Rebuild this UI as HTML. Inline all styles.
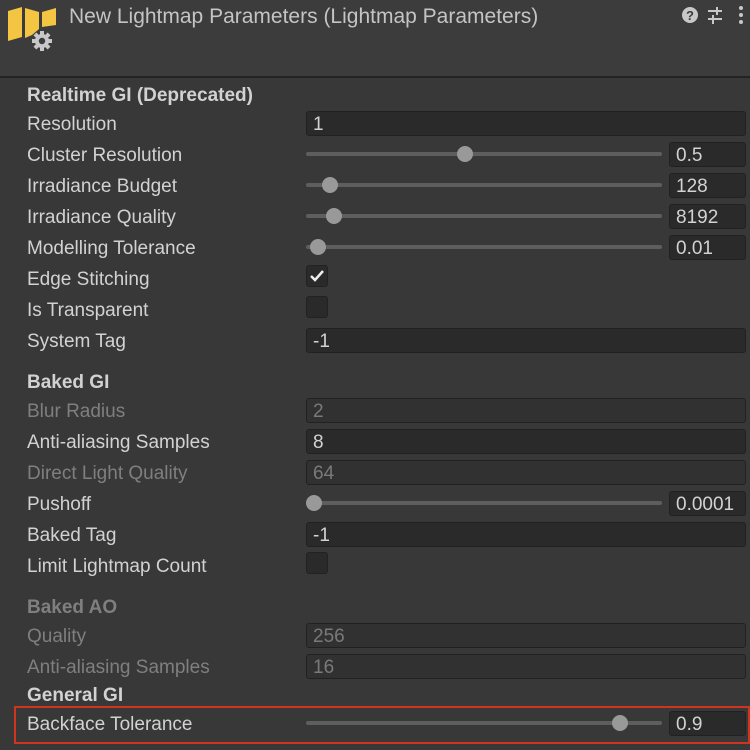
<!DOCTYPE html><html><head><style>
body{margin:0;width:750px;height:750px;background:#383838;font-family:"Liberation Sans",sans-serif;overflow:hidden;position:relative;color:#d2d2d2}
.hdr{position:absolute;left:0;top:0;width:750px;height:76px;background:#3c3c3c;border-bottom:2px solid #232323}
.t{position:absolute;font-size:19px;white-space:nowrap;line-height:20px;margin-top:2px}
.b{font-weight:bold}
.d{color:#7f7f7f}
.f{position:absolute;left:306px;background:#2a2a2a;border:1px solid #212121;border-radius:3px;font-size:19px;line-height:25px;padding-left:6px;box-sizing:border-box;width:440px;height:25px}
.fd{color:#7a7a7a;background:#313131}
.n{left:669px;width:77px}
.tr{position:absolute;left:306px;width:356px;height:4px;background:#5e5e5e;border-radius:2px}
.k{position:absolute;width:16px;height:16px;border-radius:50%;background:#999}
.cb{position:absolute;left:306px;width:22px;height:22px;background:#2a2a2a;border:1px solid #222;border-radius:3px;box-sizing:border-box}
</style></head><body>
<div class="hdr"></div>
<svg style="position:absolute;left:6px;top:5px" width="50" height="50" viewBox="0 0 50 50">
<path d="M2 6 L16 2 L16 32 L2 36Z M19 3 L33 7 L33 24 L26 30 L19 33Z M36 7 L50 3 L50 20 L36 22Z" fill="#f4c542"/>
<g transform="translate(36,36)" fill="#c8c8c8"><circle r="7"/><rect x="-2" y="-10" width="4" height="20"/><rect x="-10" y="-2" width="20" height="4"/><rect x="-2" y="-10" width="4" height="20" transform="rotate(45)"/><rect x="-2" y="-10" width="4" height="20" transform="rotate(-45)"/><circle r="3.2" fill="#3c3c3c"/></g>
</svg>
<div class="t" style="left:69px;top:5px;font-size:21px;color:#c4c4c4">New Lightmap Parameters (Lightmap Parameters)</div>
<svg style="position:absolute;left:680px;top:5px" width="66" height="22" viewBox="0 0 66 22">
<circle cx="10" cy="10" r="8" fill="#c8c8c8"/><text x="10" y="15" text-anchor="middle" font-size="13" font-weight="bold" fill="#3c3c3c" font-family="Liberation Sans">?</text>
<g stroke="#c8c8c8" stroke-width="2"><line x1="28" y1="6" x2="42" y2="6"/><line x1="28" y1="14" x2="42" y2="14"/><line x1="37" y1="2" x2="37" y2="10"/><line x1="33" y1="10" x2="33" y2="19"/></g>
<g fill="#c8c8c8"><circle cx="61" cy="3" r="2"/><circle cx="61" cy="10" r="2"/><circle cx="61" cy="17" r="2"/></g>
</svg>

<div class="t b" style="left:27px;top:84px">Realtime GI (Deprecated)</div>
<div class="t" style="left:27px;top:113px">Resolution</div><div class="f" style="top:111px">1</div>
<div class="t" style="left:27px;top:144px">Cluster Resolution</div><div class="tr" style="top:152px"></div><div class="k" style="left:457px;top:146px"></div><div class="f n" style="top:142px">0.5</div>
<div class="t" style="left:27px;top:175px">Irradiance Budget</div><div class="tr" style="top:183px"></div><div class="k" style="left:322px;top:177px"></div><div class="f n" style="top:173px">128</div>
<div class="t" style="left:27px;top:206px">Irradiance Quality</div><div class="tr" style="top:214px"></div><div class="k" style="left:326px;top:208px"></div><div class="f n" style="top:204px">8192</div>
<div class="t" style="left:27px;top:237px">Modelling Tolerance</div><div class="tr" style="top:245px"></div><div class="k" style="left:310px;top:239px"></div><div class="f n" style="top:235px">0.01</div>
<div class="t" style="left:27px;top:268px">Edge Stitching</div><div class="cb" style="top:265px"><svg width="20" height="20" viewBox="0 0 20 20"><path d="M4 10 L8 14 L16 5" stroke="#eee" stroke-width="2.5" fill="none"/></svg></div>
<div class="t" style="left:27px;top:299px">Is Transparent</div><div class="cb" style="top:296px"></div>
<div class="t" style="left:27px;top:330px">System Tag</div><div class="f" style="top:328px">-1</div>

<div class="t b" style="left:27px;top:371px">Baked GI</div>
<div class="t d" style="left:27px;top:400px">Blur Radius</div><div class="f fd" style="top:398px">2</div>
<div class="t" style="left:27px;top:431px">Anti-aliasing Samples</div><div class="f" style="top:429px">8</div>
<div class="t d" style="left:27px;top:462px">Direct Light Quality</div><div class="f fd" style="top:460px">64</div>
<div class="t" style="left:27px;top:493px">Pushoff</div><div class="tr" style="top:501px"></div><div class="k" style="left:306px;top:495px"></div><div class="f n" style="top:491px">0.0001</div>
<div class="t" style="left:27px;top:524px">Baked Tag</div><div class="f" style="top:522px">-1</div>
<div class="t" style="left:27px;top:555px">Limit Lightmap Count</div><div class="cb" style="top:552px"></div>

<div class="t b d" style="left:27px;top:596px">Baked AO</div>
<div class="t d" style="left:27px;top:625px">Quality</div><div class="f fd" style="top:623px">256</div>
<div class="t d" style="left:27px;top:656px">Anti-aliasing Samples</div><div class="f fd" style="top:654px">16</div>
<div class="t b" style="left:27px;top:684px">General GI</div>
<div class="t" style="left:27px;top:713px">Backface Tolerance</div><div class="tr" style="top:721px"></div><div class="k" style="left:612px;top:715px"></div><div class="f n" style="top:711px">0.9</div>
<div style="position:absolute;left:14px;top:706px;width:732px;height:34px;border:2px solid #d0341c"></div>
</body></html>
